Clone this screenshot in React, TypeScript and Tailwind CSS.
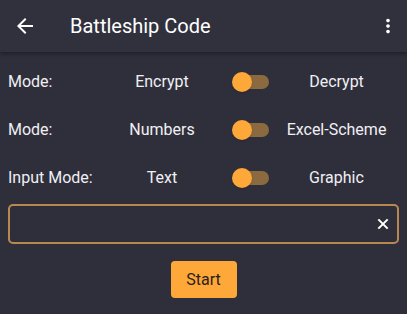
import React, { useState } from 'react';

const font = { fontFamily: 'Roboto, "Noto Sans", sans-serif' };

const Toggle = ({ on, onClick }: { on: boolean; onClick: () => void }) => (
  <button onClick={onClick} className="relative w-[40px] h-[24px] flex items-center shrink-0">
    <span className="absolute left-[5px] w-[32px] h-[14px] rounded-full bg-[#8a6a3e]" />
    <span
      className={`absolute w-[20px] h-[20px] rounded-full bg-[#ffa83a] shadow ${on ? 'left-[19px]' : 'left-[0px]'}`}
    />
  </button>
);

const Row = ({ label, left, right }: { label: string; left: string; right: string }) => {
  const [on, setOn] = useState(false);
  return (
    <div className="flex items-center h-[48px] text-[16px] text-[#f0f0f4]">
      <span className="w-[110px] pl-[8px]">{label}</span>
      <span className="w-[104px] text-center">{left}</span>
      <div className="w-[62px] flex justify-center pl-[14px]">
        <Toggle on={on} onClick={() => setOn(!on)} />
      </div>
      <span className="flex-1 text-center pr-[10px]">{right}</span>
    </div>
  );
};

export default function App() {
  const [text, setText] = useState('');
  return (
    <div className="w-[407px] h-[314px] bg-[#2f2f3b] overflow-hidden" style={font}>
      {/* HEADER */}
      <div className="h-[52px] bg-[#31313d] flex items-center shadow-[0_2px_4px_rgba(0,0,0,0.35)] relative">
        <svg className="ml-[13px] w-[24px] h-[24px]" viewBox="0 0 24 24" fill="white">
          <path d="M20 11H7.83l5.59-5.59L12 4l-8 8 8 8 1.41-1.41L7.83 13H20v-2z" />
        </svg>
        <span className="ml-[33px] text-[20px] text-white">Battleship Code</span>
        <svg className="ml-auto mr-[8px] w-[22px] h-[22px]" viewBox="0 0 24 24" fill="white">
          <path d="M12 8c1.1 0 2-.9 2-2s-.9-2-2-2-2 .9-2 2 .9 2 2 2zm0 2c-1.1 0-2 .9-2 2s.9 2 2 2 2-.9 2-2-.9-2-2-2zm0 6c-1.1 0-2 .9-2 2s.9 2 2 2 2-.9 2-2-.9-2-2-2z" />
        </svg>
      </div>

      {/* OPTIONS */}
      <div className="pt-[6px]">
        <Row label="Mode:" left="Encrypt" right="Decrypt" />
        <Row label="Mode:" left="Numbers" right="Excel-Scheme" />
        <Row label="Input Mode:" left="Text" right="Graphic" />
      </div>

      {/* INPUT */}
      <div className="px-[8px] mt-[2px]">
        <div className="h-[40px] border-2 border-[#b98850] rounded-[5px] flex items-center">
          <input
            value={text}
            onChange={e => setText(e.target.value)}
            className="flex-1 bg-transparent outline-none text-white text-[16px] px-[10px]"
          />
          <button onClick={() => setText('')} className="mr-[6px]">
            <svg className="w-[16px] h-[16px]" viewBox="0 0 24 24" fill="none" stroke="white" strokeWidth={3}>
              <path d="M5 5l14 14M19 5L5 19" />
            </svg>
          </button>
        </div>
      </div>

      {/* ACTION */}
      <div className="flex justify-center mt-[17px]">
        <button className="w-[66px] h-[37px] bg-[#ffa83a] rounded-[4px] text-[16px] text-[#2a2118]">
          Start
        </button>
      </div>
    </div>
  );
}
